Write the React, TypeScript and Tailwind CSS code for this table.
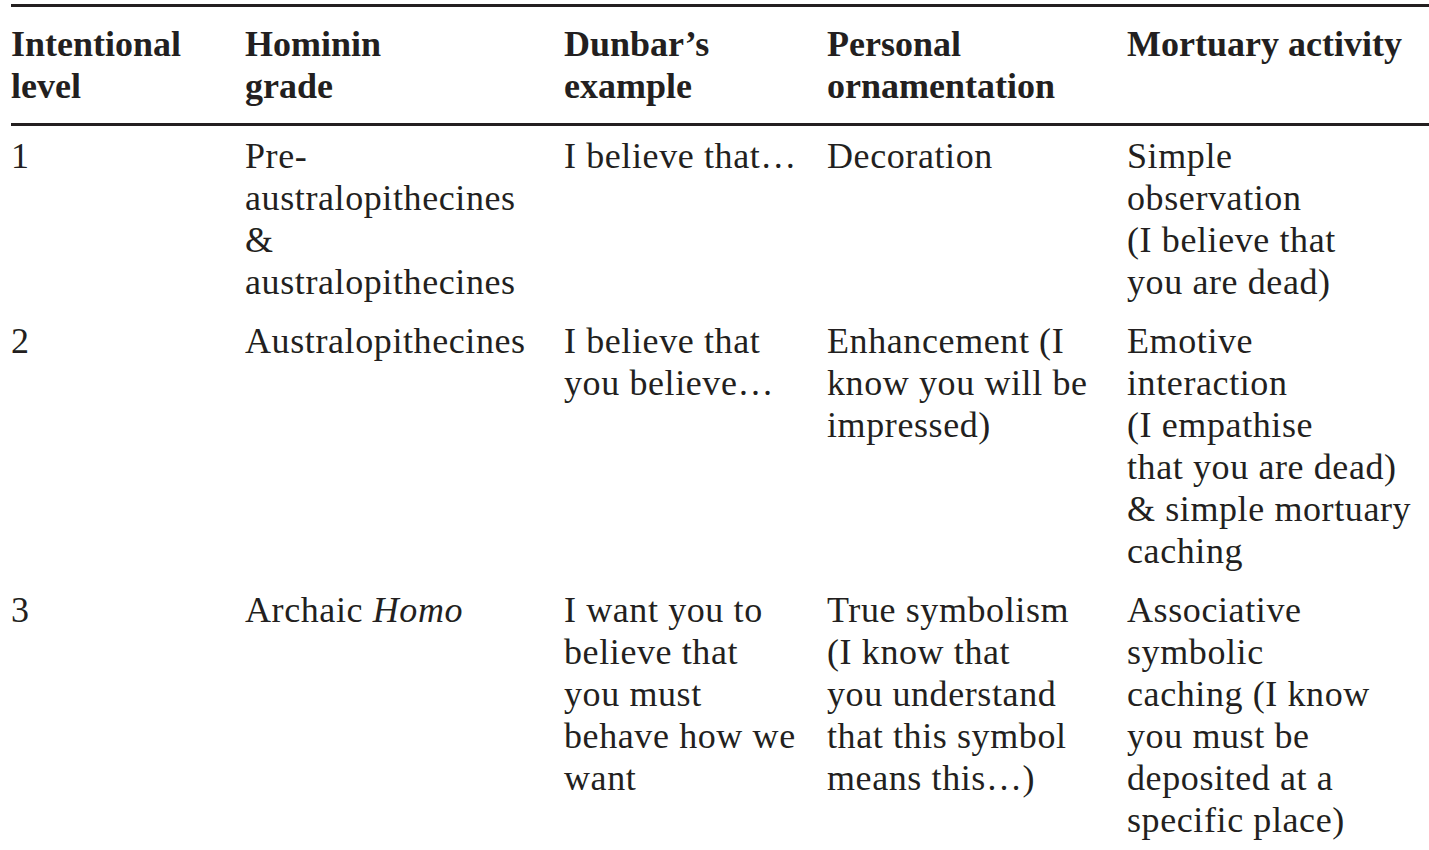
const serif = { fontFamily: '"Liberation Serif", "Times New Roman", serif' };

type Row = { level: string; grade: React.ReactNode[]; example: string[]; ornament: string[]; mortuary: string[] };

const rows: Row[] = [
  {
    level: "1",
    grade: ["Pre-", "australopithecines", "&", "australopithecines"],
    example: ["I believe that…"],
    ornament: ["Decoration"],
    mortuary: ["Simple", "observation", "(I believe that", "you are dead)"],
  },
  {
    level: "2",
    grade: ["Australopithecines"],
    example: ["I believe that", "you believe…"],
    ornament: ["Enhancement (I", "know you will be", "impressed)"],
    mortuary: ["Emotive", "interaction", "(I empathise", "that you are dead)", "& simple mortuary", "caching"],
  },
  {
    level: "3",
    grade: [
      <>
        Archaic <i>Homo</i>
      </>,
    ],
    example: ["I want you to", "believe that", "you must", "behave how we", "want"],
    ornament: ["True symbolism", "(I know that", "you understand", "that this symbol", "means this…)"],
    mortuary: ["Associative", "symbolic", "caching (I know", "you must be", "deposited at a", "specific place)"],
  },
];

const Lines = ({ lines }: { lines: React.ReactNode[] }) => (
  <div className="whitespace-nowrap">
    {lines.map((l, i) => (
      <div key={i}>{l}</div>
    ))}
  </div>
);

const cols = "grid grid-cols-[234px_319px_263px_300px_1fr]";

export default function App() {
  return (
    <div className="min-h-screen bg-white pl-[11px] text-[#231f20]" style={serif}>
      <div className="pt-[4px]">
        <div className="h-[3px] bg-[#231f20]" />
      </div>

      {/* Header */}
      <div className={`${cols} pt-[16px] pb-[16px] text-[36px] leading-[42px] font-bold`}>
        <Lines lines={["Intentional", "level"]} />
        <Lines lines={["Hominin", "grade"]} />
        <Lines lines={["Dunbar’s", "example"]} />
        <Lines lines={["Personal", "ornamentation"]} />
        <Lines lines={["Mortuary activity"]} />
      </div>
      <div className="h-[3px] bg-[#231f20]" />

      {/* Body */}
      <div className="pt-[9px] text-[36px] leading-[42px] tracking-[0.6px]">
        {rows.map((r) => (
          <div key={r.level} className={`${cols} pb-[17px]`}>
            <Lines lines={[r.level]} />
            <Lines lines={r.grade} />
            <Lines lines={r.example} />
            <Lines lines={r.ornament} />
            <Lines lines={r.mortuary} />
          </div>
        ))}
      </div>
    </div>
  );
}
